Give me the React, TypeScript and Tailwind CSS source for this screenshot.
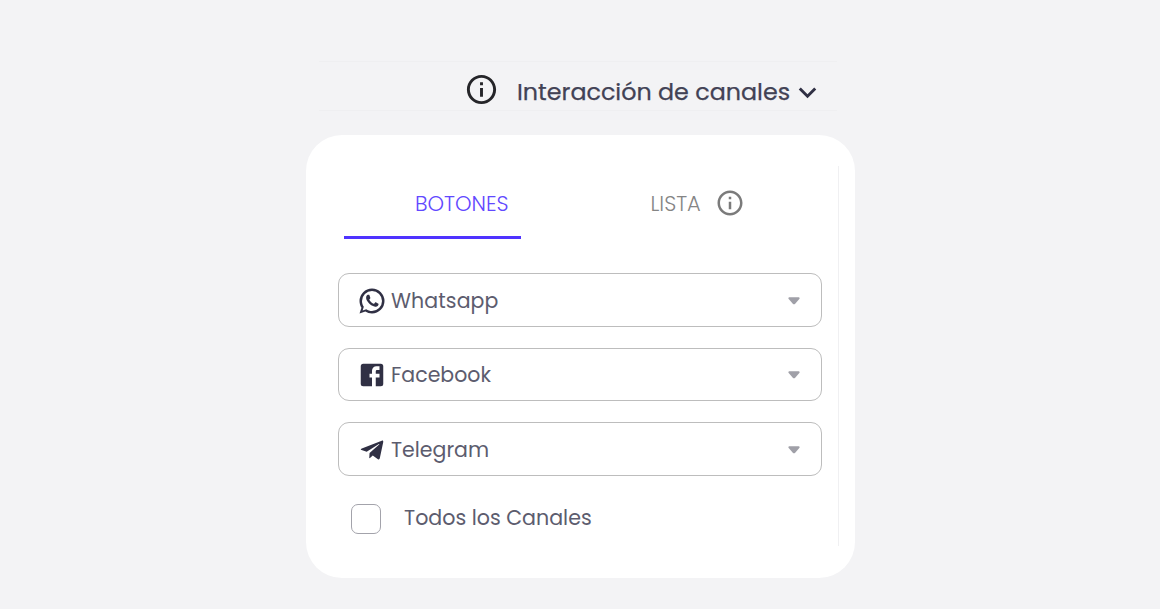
import { MdKeyboardArrowDown, MdOutlineInfo } from 'react-icons/md'
import { twMerge } from 'tailwind-merge'

type Channel = {
  name: string
  path: string
  height: string
  spacing: string
}

const channels: Channel[] = [
  {
    name: 'Whatsapp',
    path: 'M16.75,13.96C17,14.09 17.16,14.16 17.21,14.26C17.27,14.37 17.25,14.87 17,15.44C16.8,16 15.76,16.54 15.3,16.56C14.84,16.58 14.83,16.92 12.34,15.83C9.85,14.74 8.35,12.08 8.23,11.91C8.11,11.74 7.27,10.53 7.31,9.3C7.36,8.08 8,7.5 8.26,7.26C8.5,7 8.77,6.97 8.94,7H9.41C9.56,7 9.77,6.94 9.96,7.45L10.65,9.32C10.71,9.45 10.75,9.6 10.66,9.76L10.39,10.17L10,10.59C9.88,10.71 9.74,10.84 9.88,11.09C10,11.35 10.5,12.18 11.2,12.87C12.11,13.75 12.91,14.04 13.15,14.17C13.39,14.31 13.54,14.29 13.69,14.13L14.5,13.19C14.69,12.94 14.85,13 15.08,13.08L16.75,13.96M12,2A10,10 0 0,1 22,12A10,10 0 0,1 12,22C10.03,22 8.2,21.43 6.65,20.45L2,22L3.55,17.35C2.57,15.8 2,13.97 2,12A10,10 0 0,1 12,2M12,4A8,8 0 0,0 4,12C4,13.72 4.54,15.31 5.46,16.61L4.5,19.5L7.39,18.54C8.69,19.46 10.28,20 12,20A8,8 0 0,0 20,12A8,8 0 0,0 12,4Z',
    height: 'h-[54px] pt-px',
    spacing: 'tracking-[0.1px]',
  },
  {
    name: 'Facebook',
    path: 'M5,3H19A2,2 0 0,1 21,5V19A2,2 0 0,1 19,21H5A2,2 0 0,1 3,19V5A2,2 0 0,1 5,3M18,5H15.5A3.5,3.5 0 0,0 12,8.5V11H10V14H12V21H15V14H18V11H15V9A1,1 0 0,1 16,8H18V5Z',
    height: 'h-[53px]',
    spacing: 'tracking-normal',
  },
  {
    name: 'Telegram',
    path: 'M9.78,18.65L10.06,14.42L17.74,7.5C18.08,7.19 17.67,7.04 17.22,7.31L7.74,13.3L3.64,12C2.76,11.75 2.75,11.14 3.84,10.7L19.81,4.54C20.54,4.21 21.24,4.72 20.96,5.84L18.24,18.65C18.05,19.56 17.5,19.78 16.74,19.36L12.6,16.3L10.61,18.23C10.38,18.46 10.19,18.65 9.78,18.65Z',
    height: 'h-[54px] pt-[2px]',
    spacing: 'tracking-normal',
  },
]

const Caret = () => (
  <svg viewBox="0 0 12 8" className="h-2 w-3 text-[#a0a0a8]" fill="currentColor">
    <path d="M1.2.3h9.6q1.2.3.7 1.5L7.2 6.8q-1.2 1.1-2.4 0L.5 1.8Q0 .6 1.2.3Z" />
  </svg>
)

function Header() {
  return (
    <header className="ml-[319px] flex h-[50px] w-[518px] items-center border-y border-[#efeff1]">
      <MdOutlineInfo className="ml-[145px] mt-[7px] size-[35px] text-[#252529]" />
      <span className="ml-[18px] mt-[11px] whitespace-nowrap text-[23.8px] leading-8 text-[#424255] [-webkit-text-stroke:0.25px]">
        Interacción de canales
      </span>
      <MdKeyboardArrowDown className="mt-3 size-[35px] text-[#303044]" />
    </header>
  )
}

function Tabs() {
  return (
    <div className="ml-[5.5px] flex h-[73px]">
      <button className="flex h-[73px] w-[177px] justify-end border-b-[3px] border-[#4f33ff] pr-3 text-[21px] font-light leading-8 text-[#6248ff]">
        <span className="mt-[22px]">BOTONES</span>
      </button>
      <button className="ml-[130px] flex h-[73px] items-start text-[21px] font-light leading-8 text-[#858585]">
        <span className="mt-[22px] w-16 text-left">LISTA</span>
        <MdOutlineInfo className="mt-[22px] size-[30px] text-[#7b7b7b]" />
      </button>
    </div>
  )
}

function ChannelSelect({ name, path, height, spacing }: Channel) {
  return (
    <button className={twMerge('flex w-[484px] items-center rounded-[11px] border-[1.5px] border-[#bdbdbd] pl-[17.5px] pr-[21px] text-[#5c5c6e]', height)}>
      <svg viewBox="0 0 24 24" className="size-[30px] text-[#303044]" fill="currentColor" fillRule="evenodd">
        <path d={path} />
      </svg>
      <span className={twMerge('ml-[4.5px] text-[20.5px] leading-8', spacing)}>{name}</span>
      <span className="ml-auto">
        <Caret />
      </span>
    </button>
  )
}

export default function App() {
  return (
    <main className="h-[609px] w-[1160px] overflow-hidden bg-[#f3f3f5] pt-[61px] font-[Poppins,Inter,sans-serif]">
      <Header />
      <section className="ml-[306px] mt-6 flex h-[443px] w-[549px] rounded-[36px] bg-white pl-8 pt-[31px]">
        <div className="h-[380px] w-[501px] border-r border-[#f0f0f2]">
          <Tabs />
          <div className="mt-[34px] flex flex-col gap-[21px]">
            {channels.map((channel) => (
              <ChannelSelect key={channel.name} {...channel} />
            ))}
          </div>
          <label className="ml-[13px] mt-7 flex items-start">
            <span className="size-[30px] rounded-[7px] border-[1.5px] border-[#a3a3ab]" />
            <span className="-mt-[2px] ml-[23px] text-[20.6px] leading-8 text-[#5c5c6e]">Todos los Canales</span>
          </label>
        </div>
      </section>
    </main>
  )
}
